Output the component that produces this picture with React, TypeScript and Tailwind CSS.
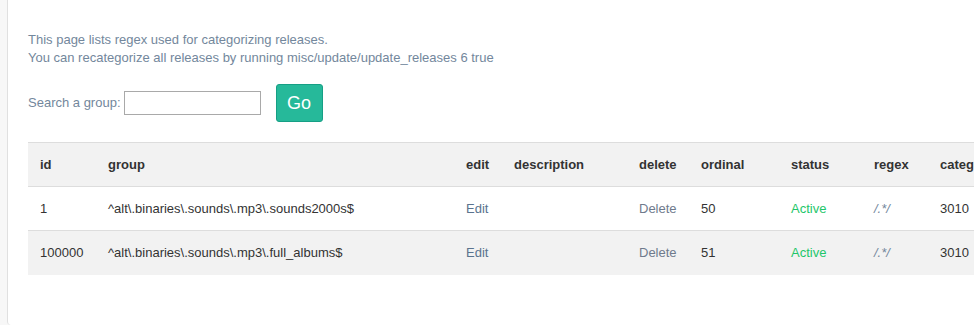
import React from "react";

const rows = [
  { id: "1", group: "^alt\\.binaries\\.sounds\\.mp3\\.sounds2000s$", ordinal: "50", category: "3010" },
  { id: "100000", group: "^alt\\.binaries\\.sounds\\.mp3\\.full_albums$", ordinal: "51", category: "3010" },
];

const headers = [
  { label: "id", w: "w-[68px]" },
  { label: "group", w: "w-[358px]" },
  { label: "edit", w: "w-[48px]" },
  { label: "description", w: "w-[125px]" },
  { label: "delete", w: "w-[62px]" },
  { label: "ordinal", w: "w-[90px]" },
  { label: "status", w: "w-[83px]" },
  { label: "regex", w: "w-[66px]" },
  { label: "category", w: "w-[100px]" },
];

export default function App() {
  return (
    <div
      className="h-[325px] overflow-hidden bg-[#f7f7f7] text-[13px] text-[#73879c]"
      style={{ fontFamily: '"Liberation Sans", Arial, sans-serif' }}
    >
      <div className="ml-[7px] h-[325px] overflow-hidden rounded-bl-[4px] border-l border-[#e0e0e0] bg-white pl-[20px] pt-[31px]">
        <p className="leading-[18px]">This page lists regex used for categorizing releases.</p>
        <p className="leading-[18px]">
          You can recategorize all releases by running misc/update/update_releases 6 true
        </p>

        <form className="mt-[17px] flex items-center" onSubmit={(e) => e.preventDefault()}>
          <label className="mr-[3px]">Search a group:</label>
          <input
            type="text"
            className="h-[24px] w-[137px] border border-[#a9a9a9] bg-white px-1 outline-none"
          />
          <button
            type="submit"
            className="ml-[15px] h-[38px] w-[47px] rounded-[3px] border border-[#169f85] bg-[#26b99a] text-[18px] text-white"
          >
            Go
          </button>
        </form>

        <div className="mt-[20px] overflow-hidden">
          <table className="w-[1000px] table-fixed border-collapse text-left">
            <thead>
              <tr className="h-[44px] border-t border-[#dddddd] bg-[#f2f2f2]">
                {headers.map((h) => (
                  <th key={h.label} className={`${h.w} px-[12px] font-bold text-[#333333]`}>
                    {h.label}
                  </th>
                ))}
              </tr>
            </thead>
            <tbody>
              {rows.map((r, i) => (
                <tr
                  key={r.id}
                  className={`h-[44px] border-t border-[#dddddd] ${i % 2 === 1 ? "bg-[#f2f2f2]" : "bg-white"}`}
                >
                  <td className="px-[12px] text-[#333333]">{r.id}</td>
                  <td className="px-[12px] text-[#333333]">{r.group}</td>
                  <td className="px-[12px] text-[#5a738e]">Edit</td>
                  <td className="px-[12px]"></td>
                  <td className="px-[12px] text-[#6f7a8c]">Delete</td>
                  <td className="px-[12px] text-[#333333]">{r.ordinal}</td>
                  <td className="px-[12px] text-[#1fc66b]">Active</td>
                  <td className="px-[12px] italic text-[#73879c]">/.*/</td>
                  <td className="px-[12px] text-[#333333]">{r.category}</td>
                </tr>
              ))}
            </tbody>
          </table>
        </div>
      </div>
    </div>
  );
}
